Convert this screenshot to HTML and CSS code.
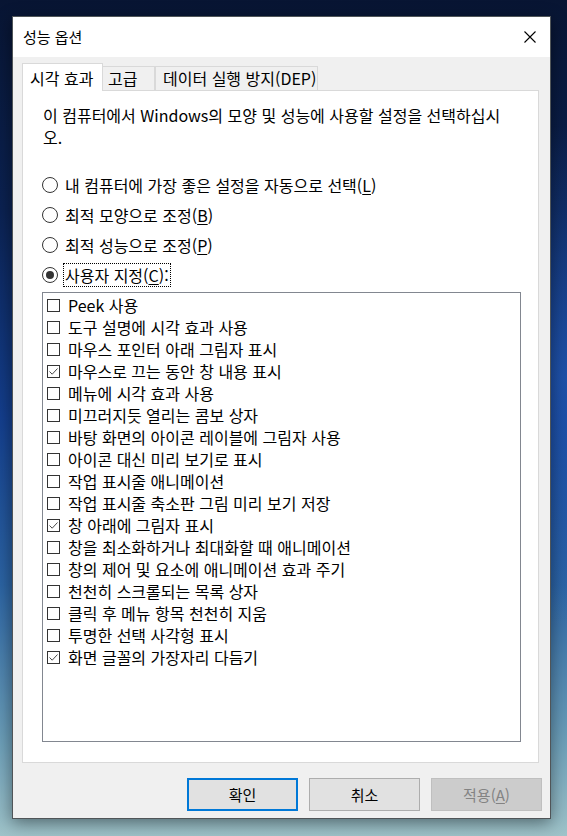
FILE: index.html
```html
<!DOCTYPE html>
<html lang="ko">
<head>
<meta charset="utf-8">
<title>성능 옵션</title>
<link rel="stylesheet" href="styles.css">
</head>
<body>
<div class="window">
  <div class="titlebar">
    <span class="title">성능 옵션</span>
    <svg class="close" width="12" height="12" viewBox="0 0 12 12"><path d="M0.5 0.5 L11.5 11.5 M11.5 0.5 L0.5 11.5" stroke="#000" stroke-width="1.1" fill="none"/></svg>
  </div>
  <div class="content">
    <div class="tabs">
      <div class="tab tab-active">시각 효과</div>
      <div class="tab tab-adv">고급</div>
      <div class="tab tab-dep">데이터 실행 방지(DEP)</div>
    </div>
    <div class="panel">
      <p class="desc">이 컴퓨터에서 Windows의 모양 및 성능에 사용할 설정을 선택하십시<br>오.</p>
      <div class="radios">
        <div class="radio"><span class="circle"></span><span class="rlabel">내 컴퓨터에 가장 좋은 설정을 자동으로 선택(<u>L</u>)</span></div>
        <div class="radio"><span class="circle"></span><span class="rlabel">최적 모양으로 조정(<u>B</u>)</span></div>
        <div class="radio"><span class="circle"></span><span class="rlabel">최적 성능으로 조정(<u>P</u>)</span></div>
        <div class="radio"><span class="circle circle-on"></span><span class="rlabel focus">사용자 지정(<u>C</u>):</span></div>
      </div>
      <div class="list">
        <div class="item"><span class="box"></span>Peek 사용</div>
        <div class="item"><span class="box"></span>도구 설명에 시각 효과 사용</div>
        <div class="item"><span class="box"></span>마우스 포인터 아래 그림자 표시</div>
        <div class="item"><span class="box"><svg width="11" height="11" viewBox="0 0 11 11"><path d="M1.5 5.5 L4.2 8.2 L9.5 2.5" stroke="#4a4a4a" stroke-width="1" fill="none"/></svg></span>마우스로 끄는 동안 창 내용 표시</div>
        <div class="item"><span class="box"></span>메뉴에 시각 효과 사용</div>
        <div class="item"><span class="box"></span>미끄러지듯 열리는 콤보 상자</div>
        <div class="item"><span class="box"></span>바탕 화면의 아이콘 레이블에 그림자 사용</div>
        <div class="item"><span class="box"></span>아이콘 대신 미리 보기로 표시</div>
        <div class="item"><span class="box"></span>작업 표시줄 애니메이션</div>
        <div class="item"><span class="box"></span>작업 표시줄 축소판 그림 미리 보기 저장</div>
        <div class="item"><span class="box"><svg width="11" height="11" viewBox="0 0 11 11"><path d="M1.5 5.5 L4.2 8.2 L9.5 2.5" stroke="#4a4a4a" stroke-width="1" fill="none"/></svg></span>창 아래에 그림자 표시</div>
        <div class="item"><span class="box"></span>창을 최소화하거나 최대화할 때 애니메이션</div>
        <div class="item"><span class="box"></span>창의 제어 및 요소에 애니메이션 효과 주기</div>
        <div class="item"><span class="box"></span>천천히 스크롤되는 목록 상자</div>
        <div class="item"><span class="box"></span>클릭 후 메뉴 항목 천천히 지움</div>
        <div class="item"><span class="box"></span>투명한 선택 사각형 표시</div>
        <div class="item"><span class="box"><svg width="11" height="11" viewBox="0 0 11 11"><path d="M1.5 5.5 L4.2 8.2 L9.5 2.5" stroke="#4a4a4a" stroke-width="1" fill="none"/></svg></span>화면 글꼴의 가장자리 다듬기</div>
      </div>
    </div>
    <div class="buttons">
      <div class="btn btn-default">확인</div>
      <div class="btn">취소</div>
      <div class="btn btn-disabled">적용(<u>A</u>)</div>
    </div>
  </div>
</div>
</body>
</html>
```
FILE: styles.css
```css
* { box-sizing: border-box; }
html, body { margin: 0; padding: 0; }
body {
  width: 567px;
  height: 836px;
  overflow: hidden;
  padding: 16px 0 0 12px;
  background:
    radial-gradient(ellipse 60% 30% at 100% 45%, rgba(40, 100, 200, 0.55), rgba(40, 100, 200, 0) 100%),
    linear-gradient(to bottom, #081533 0%, #0b2252 25%, #143f8e 50%, #2c64a3 70%, #6a9db8 88%, #9fc3c9 100%);
  font-family: "Noto Sans CJK KR", "Noto Sans", sans-serif;
  font-size: 16px;
  color: #000;
}
.window {
  width: 539px;
  height: 803px;
  border: 1px solid #505558;
  background: #f0f0f0;
  box-shadow: 0 4px 16px rgba(0, 0, 0, 0.45);
  display: flex;
  flex-direction: column;
}
.titlebar {
  height: 40px;
  background: #fff;
  display: flex;
  align-items: center;
  justify-content: space-between;
  padding: 0 14px 0 10px;
  line-height: 20px;
}
.title { font-size: 15px; }
.close { display: block; }
.content {
  padding: 6px 11px 0 9px;
  display: flex;
  flex-direction: column;
}
.tabs {
  display: flex;
  align-items: flex-end;
  height: 28px;
  margin-bottom: -1px;
  position: relative;
  z-index: 1;
}
.tab {
  height: 25px;
  border: 1px solid #d9d9d9;
  background: #f0f0f0;
  line-height: 22px;
  white-space: nowrap;
}
.tab-active {
  width: 81px;
  height: 28px;
  background: #fff;
  border-bottom: none;
  padding: 3px 0 0 7px;
}
.tab-adv {
  width: 52px;
  border-left: none;
  padding-left: 5px;
}
.tab-dep {
  width: 163px;
  border-left: 1px solid #d9d9d9;
  padding-left: 7px;
}
.panel {
  height: 673px;
  width: 517px;
  background: #fff;
  border: 1px solid #d9d9d9;
  padding: 13px 0 0 19px;
}
.desc {
  margin: 0;
  padding-left: 1px;
  line-height: 22px;
}
.radios {
  margin-top: 22px;
}
.radio {
  height: 30px;
  display: flex;
  align-items: center;
}
.circle {
  width: 16px;
  height: 16px;
  border: 1px solid #333;
  border-radius: 50%;
  margin-right: 5px;
  display: flex;
  align-items: center;
  justify-content: center;
  flex: none;
}
.circle-on::after {
  content: "";
  width: 8px;
  height: 8px;
  border-radius: 50%;
  background: #333;
}
.rlabel {
  border: 1px dotted transparent;
  line-height: 22px;
  padding: 0 1px;
}
.rlabel.focus { border-color: #000; }
.list {
  margin-top: 2px;
  width: 479px;
  height: 450px;
  border: 1px solid #828790;
  padding: 1px 0 0 4px;
}
.item {
  height: 22px;
  display: flex;
  align-items: center;
  line-height: 22px;
  white-space: nowrap;
}
.box {
  width: 13px;
  height: 13px;
  border: 1px solid #333;
  margin-right: 8px;
  flex: none;
  display: flex;
  align-items: center;
  justify-content: center;
  background: #fff;
}
.box svg { display: block; }
.buttons {
  margin-top: 15px;
  display: flex;
  justify-content: flex-end;
  gap: 11px;
  margin-right: -3px;
  font-size: 15px;
}
.btn {
  width: 111px;
  height: 33px;
  background: #e1e1e1;
  border: 1px solid #adadad;
  display: flex;
  align-items: center;
  justify-content: center;
  line-height: 20px;
}
.btn-default { border: 2px solid #0078d7; }
.btn-disabled {
  background: #cccccc;
  border-color: #bfbfbf;
  color: #838383;
}
u { text-decoration: underline; text-underline-offset: 2px; }
```
